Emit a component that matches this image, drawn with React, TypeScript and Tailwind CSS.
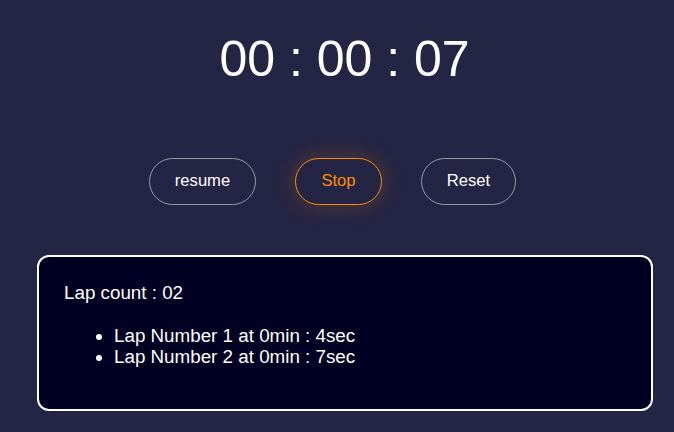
import React from 'react';

const laps = [
  { n: 1, min: 0, sec: 4 },
  { n: 2, min: 0, sec: 7 },
];

export default function App() {
  return (
    <div className="min-h-[432px] w-full bg-[#242444] text-white font-['Liberation_Sans',Arial,sans-serif] flex flex-col items-center pt-[31px]">
      {/* Timer */}
      <div className="text-[50px] leading-[56px] pl-[15px]">00 : 00 : 07</div>

      {/* Controls */}
      <div className="mt-[71px] flex gap-[39px] pr-[9px]">
        <button className="h-[47px] w-[107px] rounded-full border border-[#9a9aa6] text-[16.6px] text-white">
          resume
        </button>
        <button className="h-[47px] w-[87px] rounded-full border border-[#ff8c00] text-[16.6px] text-[#ff8c00] shadow-[0_0_22px_rgba(255,140,0,0.25)]">
          Stop
        </button>
        <button className="h-[47px] w-[95px] rounded-full border border-[#9a9aa6] text-[16.6px] text-white">
          Reset
        </button>
      </div>

      {/* Laps */}
      <div className="mt-[50px] ml-[16px] w-[616px] h-[156px] rounded-[12px] border-2 border-white bg-[#000022] px-[25px] pt-[25px] text-[18.8px] leading-[21px]">
        <p>Lap count : 02</p>
        <ul className="list-disc mt-[22px] pl-[50px]">
          {laps.map((l) => (
            <li key={l.n}>
              Lap Number {l.n} at {l.min}min : {l.sec}sec
            </li>
          ))}
        </ul>
      </div>
    </div>
  );
}
